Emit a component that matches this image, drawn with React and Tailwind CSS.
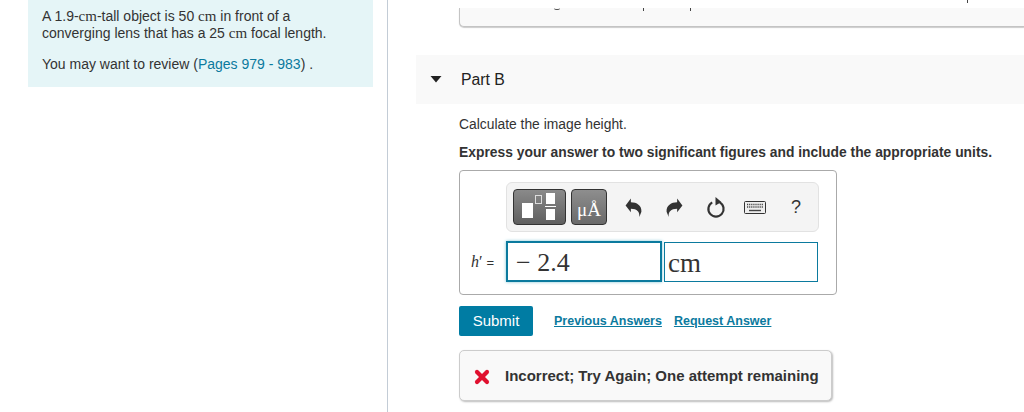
import React from 'react';
import { X } from 'lucide-react';

const serif = 'font-["Liberation_Serif",serif]';

const UndoIcon = ({ flip }) => (
  <svg width="17" height="19" viewBox="0 0 16 18" className={flip ? '-scale-x-100' : ''}>
    <path d="M0.5 7 L5.5 0.5 V4 C11 4 16 7 15.5 13 L13.5 18 C14 13 11.5 10.2 5.5 10.2 V13.5 Z" fill="#333" />
  </svg>
);

const RedoCircle = () => (
  <svg width="20" height="23" viewBox="0 0 20 23">
    <path d="M6.2 6.4 A7.6 7.6 0 1 0 13.8 6.4" fill="none" stroke="#333" strokeWidth="2.2" />
    <path d="M9.5 1 L15.4 6 L9.5 9.6 Z" fill="#333" />
  </svg>
);

const Keyboard = () => (
  <svg width="22" height="13" viewBox="0 0 22 13">
    <rect x="0.5" y="0.5" width="21" height="12" rx="1" fill="#eee" stroke="#333" />
    <path d="M3 3.5 H19 M3 6 H19" stroke="#444" strokeWidth="1.3" strokeDasharray="1.2 0.9" />
    <path d="M5 9.5 H17" stroke="#444" strokeWidth="1.4" />
  </svg>
);

const TemplateIcon = () => (
  <div className="flex h-full items-end gap-[2px] pb-[4px] pl-[8px]">
    <div className="mb-[2px] h-[15px] w-[11px] bg-white" />
    <div className="mb-auto mt-[5px] h-[9px] w-[7px] self-start border border-[#ddd]" />
    <div className="ml-[1px] flex flex-col items-center gap-[2px]">
      <div className="h-[11px] w-[9px] bg-white" />
      <div className="h-px w-[11px] bg-white" />
      <div className="h-[11px] w-[9px] bg-white" />
    </div>
  </div>
);

export default function App() {
  return (
    <div className='flex h-[412px] w-[1024px] overflow-hidden bg-white font-["Liberation_Sans",sans-serif] text-[14px] text-[#333]'>
      <aside className="w-[388px] shrink-0 border-r border-[#c3ccd6] pl-[28px] pr-[14px]">
        <div className="h-[87px] bg-[#e5f5f7] pl-[14px] pr-[10px] pt-[8px] leading-[17px]">
          <p>
            A 1.9-<span className={`${serif} text-[15px]`}>cm</span>-tall object is 50 <span className={`${serif} text-[15px]`}>cm</span> in front of a
            <br />
            converging lens that has a 25 <span className={`${serif} text-[15px]`}>cm</span> focal length.
          </p>
          <p className="mt-[14px]">
            You may want to review (<span className="text-[#0b7a9e]">Pages 979 - 983</span>) .
          </p>
        </div>
      </aside>

      <main className="flex-1 pl-[28px]">
        <div className="relative ml-[43px] mt-[8px] h-[19px] rounded-bl-[5px] border-b border-l border-[#c4c4c4] bg-[#f9f9f9] shadow-[0_1px_1px_#ccc]">
          <span className="absolute left-[94px] top-0 h-[2px] w-[6px] rounded-b-full border-b border-[#555]" />
          <span className="absolute left-[183px] top-0 h-[3px] w-px bg-[#444]" />
          <span className="absolute left-[230px] top-0 h-[3px] w-px bg-[#444]" />
          <span className="absolute left-[507px] top-[-8px] h-[3px] w-px bg-[#444]" />
        </div>

        <div className="mt-[28px] flex h-[49px] items-center bg-[#f9f9f9] pl-[14px]">
          <svg width="12" height="7" viewBox="0 0 12 7"><path d="M0.5 0 H11.5 L6 6.5 Z" fill="#222" /></svg>
          <span className="ml-[19px] mt-[1px] text-[15.8px] text-[#222]">Part B</span>
        </div>

        <div className="ml-[43px]">
          <p className="mt-[12px] text-[13.85px] leading-[17px]">Calculate the image height.</p>
          <p className="mt-[11px] text-[13.85px] font-bold leading-[17px]">Express your answer to two significant figures and include the appropriate units.</p>

          <div className="relative mt-[9px] h-[125px] w-[378px] rounded-[4px] border border-[#aaa] pl-[46px] pt-[11px]">
            <div className="flex h-[50px] w-[313px] items-center rounded-[6px] border border-[#e2e2e2] bg-[#f4f4f4] pl-[6px]">
              <div className="h-[36px] w-[53px] rounded-[4px] border border-[#333] bg-gradient-to-b from-[#8a8a8a] to-[#5f5f5f]">
                <TemplateIcon />
              </div>
              <div className={`${serif} ml-[5px] flex h-[36px] w-[36px] items-end justify-center rounded-[4px] border border-[#333] bg-gradient-to-b from-[#8e8e8e] to-[#6a6a6a] pb-[4px] text-[19px] leading-[20px] text-white`}>
                μÅ
              </div>
              <div className="ml-[18px] flex items-center"><UndoIcon /></div>
              <div className="ml-[24px] flex items-center"><UndoIcon flip /></div>
              <div className="ml-[23px] flex items-center"><RedoCircle /></div>
              <div className="ml-[18px] flex items-center"><Keyboard /></div>
              <span className="ml-[25px] text-[18px] text-[#333]">?</span>
            </div>

            <div className="mt-[9px] flex items-center">
              <span className={`${serif} absolute left-[11px] text-[16px]`}><i>h</i>′ <span className='font-["Liberation_Sans",sans-serif] text-[13px]'>=</span></span>
              <div className={`${serif} flex h-[41px] w-[156px] items-center border-2 border-[#0b7a9e] pl-[8px] pt-[1px] text-[26px] text-[#333] shadow-[0_0_3px_#7fc4d6]`}>
                − 2.4
              </div>
              <div className={`${serif} ml-[2px] flex h-[40px] w-[154px] items-center border border-[#0b7a9e] pl-[3px] pt-[3px] text-[27px] text-[#333]`}>
                cm
              </div>
            </div>
          </div>

          <div className="mt-[11px] flex items-center">
            <button className="h-[30px] w-[74px] rounded-[2px] bg-[#007ca3] text-[15px] text-white">Submit</button>
            <a className="ml-[21px] text-[12.5px] font-bold text-[#0b7a9e] underline">Previous Answers</a>
            <a className="ml-[12px] text-[12.5px] font-bold text-[#0b7a9e] underline">Request Answer</a>
          </div>

          <div className="mt-[14px] flex h-[51px] w-[373px] items-center rounded-[5px] border border-[#ccc] bg-[#f9f9f9] pl-[12px] pt-[2px] shadow-[1px_1px_2px_#bbb]">
            <X size={20} strokeWidth={5} className="text-[#e0102f]" />
            <span className="ml-[13px] text-[15px] font-bold text-[#333]">Incorrect; Try Again; One attempt remaining</span>
          </div>
        </div>
      </main>
    </div>
  );
}
